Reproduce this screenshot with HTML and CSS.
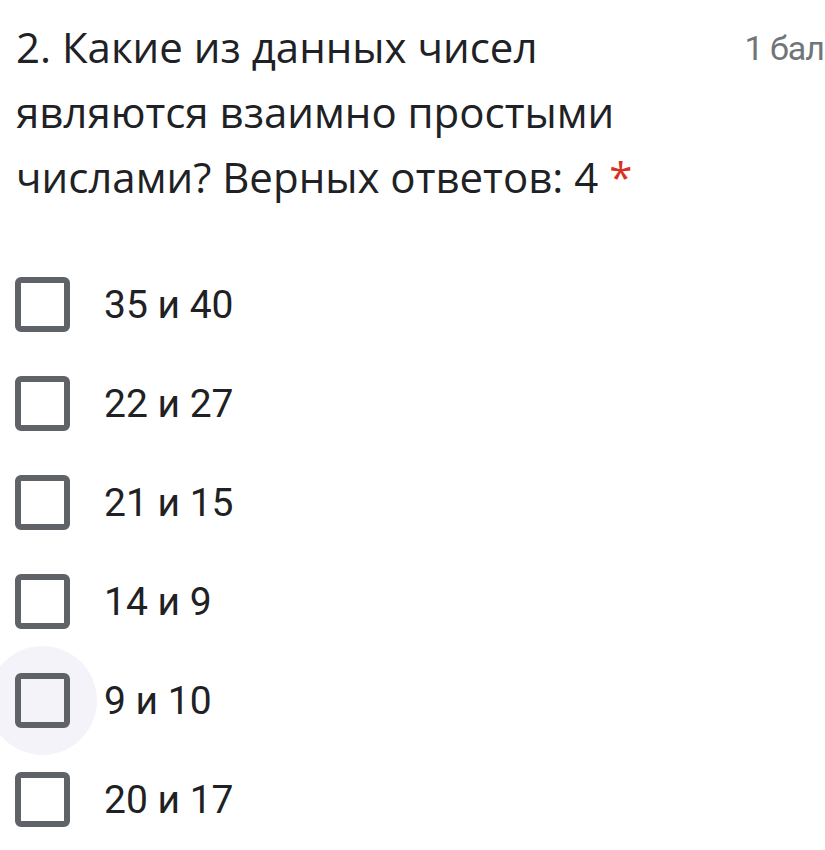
FILE: index.html
```html
<!DOCTYPE html>
<html lang="ru">
<head>
<meta charset="utf-8">
<title>Вопрос</title>
<link rel="stylesheet" href="styles.css">
</head>
<body>
<div class="question">
  <div class="header">
    <div class="title">2. Какие из данных чисел<br>являются взаимно простыми<br>числами? Верных ответов: 4 <span class="req">*</span></div>
    <div class="points">1 бал</div>
  </div>
  <ul class="options">
    <li class="option"><span class="box"></span><span class="label">35 и 40</span></li>
    <li class="option"><span class="box"></span><span class="label">22 и 27</span></li>
    <li class="option"><span class="box"></span><span class="label">21 и 15</span></li>
    <li class="option"><span class="box"></span><span class="label">14 и 9</span></li>
    <li class="option focus"><span class="box"></span><span class="label">9 и 10</span></li>
    <li class="option"><span class="box"></span><span class="label">20 и 17</span></li>
  </ul>
</div>
</body>
</html>
```
FILE: styles.css
```css
html, body {
  margin: 0;
  padding: 0;
  background: #ffffff;
  overflow: hidden;
}
body {
  width: 825px;
  height: 850px;
}
.question {
  padding: 14px 0 0 16px;
}
.header {
  display: flex;
  justify-content: space-between;
  align-items: flex-start;
}
.title {
  font-family: "Open Sans", "Roboto", sans-serif;
  font-size: 42px;
  line-height: 65px;
  color: #202124;
  letter-spacing: 0;
}
.req {
  color: #d93025;
}
.points {
  font-family: "Roboto", sans-serif;
  font-size: 34px;
  letter-spacing: -1px;
  color: #70757a;
  white-space: nowrap;
  margin-top: 14px;
  margin-right: 1px;
}
.options {
  list-style: none;
  margin: 46px 0 0 0;
  padding: 0;
}
.option {
  position: relative;
  display: flex;
  align-items: center;
  height: 99px;
}
.option.focus::before {
  content: "";
  position: absolute;
  left: -28px;
  top: -5px;
  width: 109px;
  height: 109px;
  border-radius: 50%;
  background: #f4f3f9;
  z-index: 0;
}
.box {
  position: relative;
  z-index: 1;
  box-sizing: border-box;
  width: 55px;
  height: 55px;
  border: 6.5px solid #5f6368;
  border-radius: 6px;
  margin-left: -1px;
  flex: none;
}
.label {
  position: relative;
  z-index: 1;
  margin-left: 34px;
  font-family: "Roboto", sans-serif;
  font-size: 39px;
  color: #202124;
}
```
